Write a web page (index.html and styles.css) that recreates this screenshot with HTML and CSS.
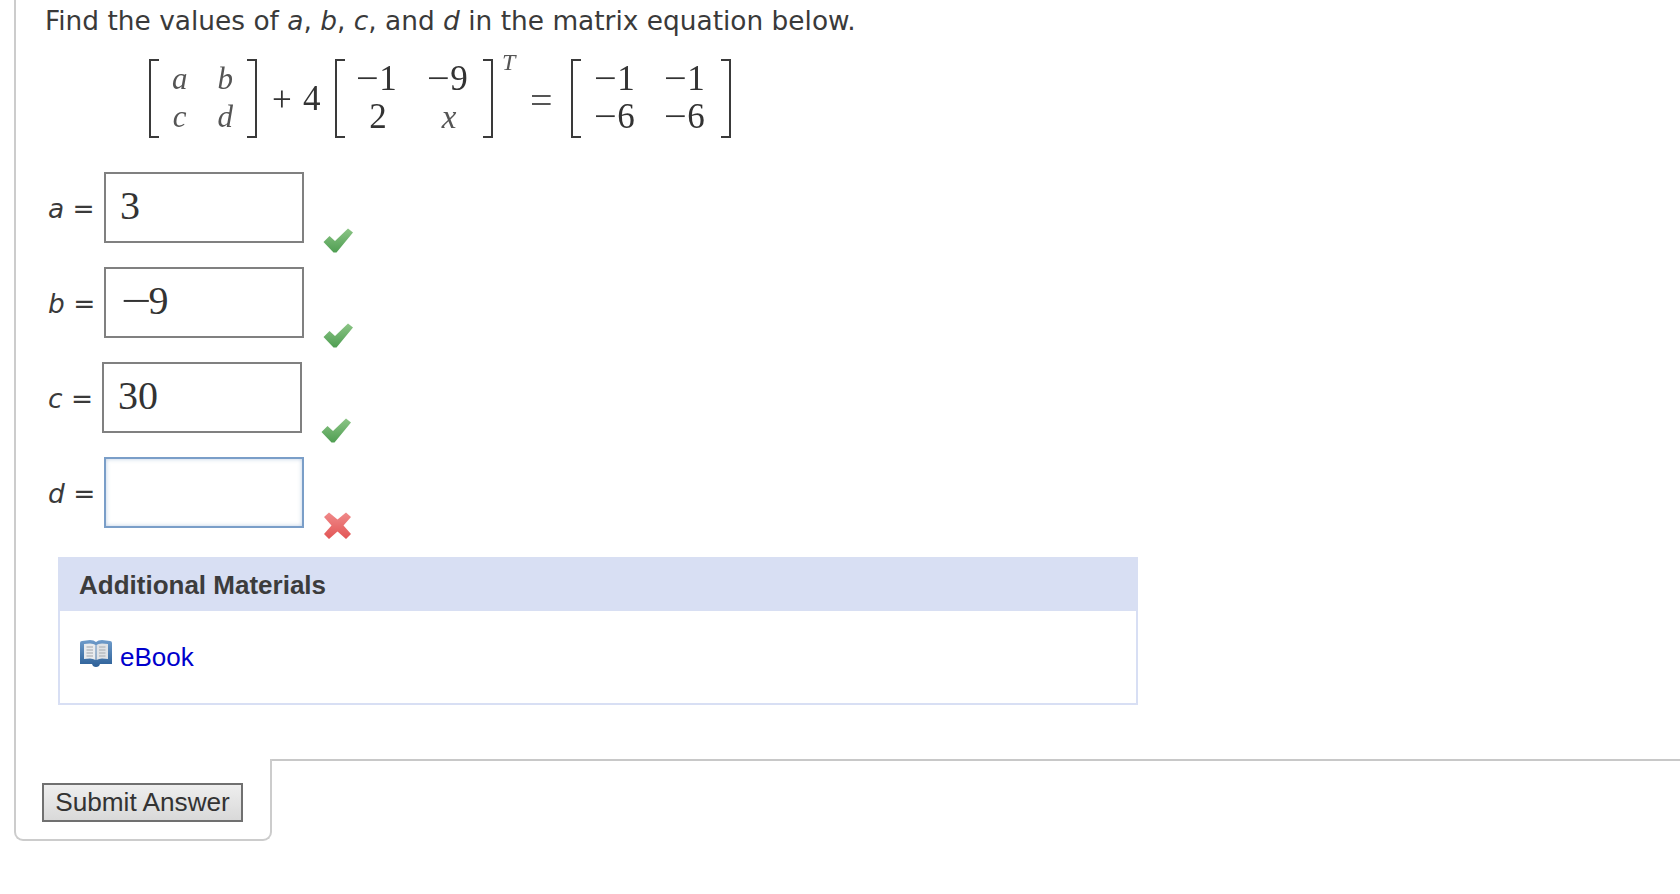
FILE: index.html
```html
<!DOCTYPE html>
<html lang="en">
<head>
<meta charset="utf-8">
<title>Matrix equation question</title>
<link rel="stylesheet" href="styles.css">
</head>
<body>
<svg class="defs" width="0" height="0" aria-hidden="true">
  <defs>
    <linearGradient id="gc" x1="0" y1="0" x2="0" y2="1"><stop offset="0" stop-color="#8cc586"/><stop offset="1" stop-color="#4f9e52"/></linearGradient>
    <linearGradient id="gx" x1="0" y1="0" x2="0" y2="1"><stop offset="0" stop-color="#f08a8a"/><stop offset="1" stop-color="#e25555"/></linearGradient>
    <linearGradient id="gb" x1="0" y1="0" x2="0" y2="1"><stop offset="0" stop-color="#6f9ccb"/><stop offset="1" stop-color="#2c5f97"/></linearGradient>
    <symbol id="check" viewBox="0 0 30 25"><path d="M0.500 14 L6.500 8 L12 13 L25 0.500 L30 4.500 L13.500 24.500 L10.500 24.500 Z" fill="url(#gc)"/></symbol>
    <symbol id="cross" viewBox="0 0 27 27"><path d="M5 0.500 L13.500 7.500 L22 0.500 L27 5 L19.500 13.500 L27 22 L22 27 L13.500 19.500 L5 27 L0 22 L7.500 13.500 L0 5 Z" fill="url(#gx)"/></symbol>
  </defs>
</svg>
<div class="upper">
  <p class="prompt">Find the values of <i>a</i>, <i>b</i>, <i>c</i>, and <i>d</i> in the matrix equation below.</p>
  <div class="equation">
    <div class="matrix m1 small">
      <span>a</span><span>b</span><span>c</span><span>d</span>
    </div>
    <span class="plus">+</span><span class="four">4</span>
    <div class="matrix m2">
      <span><span class="minus">−</span>1</span><span><span class="minus">−</span>9</span><span>2</span><span class="var">x</span>
    </div>
    <span class="sup">T</span>
    <span class="eq">=</span>
    <div class="matrix m3">
      <span><span class="minus">−</span>1</span><span><span class="minus">−</span>1</span><span><span class="minus">−</span>6</span><span><span class="minus">−</span>6</span>
    </div>
  </div>
  <div class="row">
    <span class="label"><i>a</i> =</span>
    <div class="answer"><span class="value">3</span></div>
    <svg class="mark" width="30" height="25"><use href="#check"/></svg>
  </div>
  <div class="row">
    <span class="label"><i>b</i> =</span>
    <div class="answer"><span class="value"><span class="minus">−</span>9</span></div>
    <svg class="mark" width="30" height="25"><use href="#check"/></svg>
  </div>
  <div class="row">
    <span class="label narrow"><i>c</i> =</span>
    <div class="answer"><span class="value">30</span></div>
    <svg class="mark" width="30" height="25"><use href="#check"/></svg>
  </div>
  <div class="row">
    <span class="label"><i>d</i> =</span>
    <div class="answer focused"></div>
    <svg class="mark cross" width="27" height="27"><use href="#cross"/></svg>
  </div>
  <section class="materials">
    <h2 class="materials-head">Additional Materials</h2>
    <div class="materials-body">
      <svg class="book" width="32" height="28" viewBox="0 0 32 28" aria-hidden="true">
        <path d="M0 3 Q0 1 2 1 L10 0 Q14 0 16 2 Q18 0 22 0 L30 1 Q32 1 32 3 L32 24 L20 24 L19 26 Q16 28 13 26 L12 24 L0 24 Z" fill="url(#gb)"/>
        <path d="M4 4 L10 3.500 Q14 3.500 15.500 5 L15.500 20 Q13 18.500 10 18.500 L4 19 Z" fill="#e9ebee"/>
        <path d="M28 4 L22 3.500 Q18 3.500 16.500 5 L16.500 20 Q19 18.500 22 18.500 L28 19 Z" fill="#dfe2e6"/>
        <path d="M6.500 7 H13 M6.500 10 H13 M6.500 13 H13 M6.500 16 H13 M19 7 H25.500 M19 10 H25.500 M19 13 H25.500 M19 16 H25.500" stroke="#b9bdc1" stroke-width="1.500"/>
      </svg>
      <a class="link" href="#">eBook</a>
    </div>
  </section>
</div>
<div class="footer">
  <div class="tab"><button class="submit" type="button">Submit Answer</button></div>
  <div class="tab-line"></div>
</div>
</body>
</html>
```
FILE: styles.css
```css
html, body { margin: 0; padding: 0; background: #fff; }
body { height: 894px; overflow: hidden; color: #3a3a3a; font-family: "DejaVu Sans", sans-serif; }
.defs { position: absolute; }
.upper {
  margin-left: 14px;
  border-left: 2px solid #cccccc;
  padding-left: 29px;
  height: 759px;
  box-sizing: border-box;
}
.prompt {
  margin: 0;
  font-size: 26.400px;
  line-height: 42px;
  white-space: nowrap;
}
.equation {
  margin-left: 104px;
  margin-top: 17px;
  height: 79px;
  display: flex;
  align-items: flex-start;
  font-family: "Liberation Serif", serif;
  font-size: 35px;
  color: #333;
  filter: blur(0.4px);
}
.matrix {
  display: grid;
  box-sizing: border-box;
  height: 79px;
  padding-top: 1px;
  grid-template-rows: 38px 38px;
  justify-items: center;
  align-items: baseline;
  position: relative;
  line-height: 38px;
}
.matrix::before, .matrix::after {
  content: "";
  position: absolute;
  top: 0;
  bottom: 0;
  width: 8px;
  border: 2px solid #3a3a3a;
}
.matrix::before { left: 0; border-right: 0; }
.matrix::after { right: 0; border-left: 0; }
.m1 { width: 108px; grid-template-columns: 45.500px 45.500px; padding-left: 8px; }
.m2 { width: 158px; grid-template-columns: 71px 71px; padding-left: 7.500px; margin-left: 15px; }
.m3 { width: 160px; grid-template-columns: 70px 70px; padding-left: 10px; margin-left: 18px; }
.small { font-size: 31px; font-style: italic; color: #555; }
.var { font-style: italic; font-size: 33px; color: #555; }
.plus { margin-left: 15px; line-height: 82px; width: 31px; }
.four { line-height: 80px; width: 17px; }
.sup { font-style: italic; font-size: 24px; line-height: 22px; margin-left: 9px; margin-top: -8px; width: 16px; color: #555; }
.eq { margin-left: 12px; line-height: 84px; width: 24px; font-size: 40px; color: #555; margin-right: -1px; }
.row {
  display: flex;
  align-items: flex-start;
  height: 95px;
}
.equation + .row { margin-top: 34px; }
.label {
  flex: none;
  box-sizing: border-box;
  width: 59px;
  padding-left: 3px;
  font-size: 26.400px;
  line-height: 73px;
  white-space: pre;
}
.label.narrow { width: 57px; }
.answer {
  box-sizing: border-box;
  width: 200px;
  height: 71px;
  border: 2px solid #808080;
  padding-left: 14px;
  font-family: "Liberation Serif", serif;
  font-size: 40px;
  line-height: 64px;
  color: #333;
}
.minus {
  display: inline-block;
  transform: scaleX(1.15);
  transform-origin: right center;
}
.answer .minus {
  transform: scaleX(1.35);
  margin-right: 5px;
  margin-left: 1px;
  transform-origin: left center;
}
.answer.focused {
  border-color: #7a9ec8;
  box-shadow: inset 0 0 4px rgba(122, 158, 200, 0.5);
}
.mark { margin-left: 19px; margin-top: 56px; flex: none; }
.mark.cross { margin-left: 20px; margin-top: 55px; }
.materials {
  margin-left: 13px;
  margin-top: 5px;
  width: 1080px;
  height: 148px;
  box-sizing: border-box;
  border: 2px solid #d8dff4;
  border-top: 0;
}
.materials-head {
  margin: 0 -2px;
  height: 54px;
  background: #d8dff3;
  padding-left: 21px;
  font: bold 26px/57px "Liberation Sans", Arial, sans-serif;
  color: #3c3c3c;
}
.materials-body {
  display: flex;
  align-items: flex-start;
  padding: 26px 0 0 20px;
  gap: 8px;
}
.book { margin-top: 3px; filter: blur(0.4px); }
.link {
  font: 26px/40px "Liberation Sans", Arial, sans-serif;
  color: #0000cc;
  text-decoration: none;
}
.footer { display: flex; margin-left: 14px; align-items: flex-start; }
.tab {
  box-sizing: border-box;
  width: 258px;
  height: 82px;
  border: 2px solid #cccccc;
  border-top: 0;
  border-radius: 0 0 9px 9px;
  padding: 24px 0 0 26px;
}
.tab-line { flex: 1; border-top: 2px solid #c8c8c8; }
.submit {
  display: block;
  box-sizing: border-box;
  width: 201px;
  height: 39px;
  padding: 0;
  border: 2px solid #707070;
  border-radius: 0;
  background: linear-gradient(#eeeeee, #d9d9d9);
  font: 26.200px/35px "Liberation Sans", Arial, sans-serif;
  color: #333;
}
```
